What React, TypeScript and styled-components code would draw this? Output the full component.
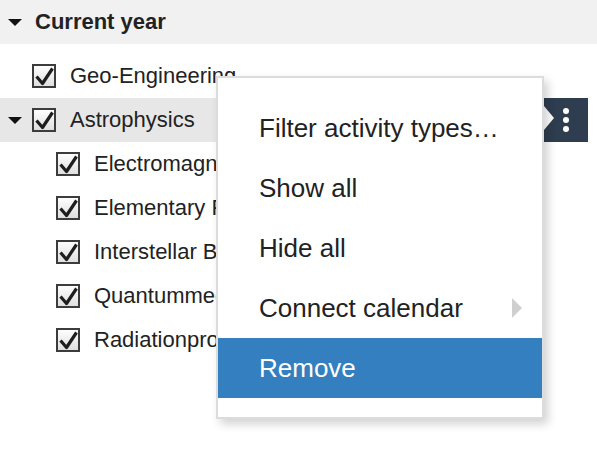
import React from 'react';
import styled, { createGlobalStyle } from 'styled-components';

const GlobalStyle = createGlobalStyle`
	body {
		margin: 0;
		background: #fff;
		font-family: 'Liberation Sans', Arial, sans-serif;
		color: #222;
	}
`;

type Item = { id: string; label: string; level: number; expanded?: boolean; active?: boolean };

const items: Item[] = [
	{ id: 'geo', label: 'Geo-Engineering', level: 0 },
	{ id: 'astro', label: 'Astrophysics', level: 0, expanded: true, active: true },
	{ id: 'em', label: 'Electromagnetic Radiation', level: 1 },
	{ id: 'ep', label: 'Elementary Particles', level: 1 },
	{ id: 'ib', label: 'Interstellar Bodies', level: 1 },
	{ id: 'qm', label: 'Quantummechanics', level: 1 },
	{ id: 'rp', label: 'Radiationprotection', level: 1 },
];

const menuItems = [
	{ label: 'Filter activity types…' },
	{ label: 'Show all' },
	{ label: 'Hide all' },
	{ label: 'Connect calendar', submenu: true },
	{ label: 'Remove', highlighted: true },
];

function CheckBox() {
	return (
		<svg width="24" height="24" viewBox="0 0 24 24">
			<defs>
				<linearGradient id="cbg" x1="0" y1="0" x2="0" y2="1">
					<stop offset="0" stopColor="#ffffff" />
					<stop offset="1" stopColor="#dedede" />
				</linearGradient>
			</defs>
			<rect x="1" y="1" width="22" height="22" fill="url(#cbg)" stroke="#3c3c3c" strokeWidth="2" />
			<path d="M4.5 12.5 L10.5 19.5 L20.5 4.5" fill="none" stroke="#1e1e1e" strokeWidth="3.2" strokeLinejoin="round" />
		</svg>
	);
}

function App() {
	return (
		<Page>
			<GlobalStyle />
			<GroupHeader>
				<Caret />
				<GroupTitle>Current year</GroupTitle>
			</GroupHeader>
			<Tree>
				{items.map((item) => (
					<Row key={item.id}>
						<RowBand $level={item.level} $active={!!item.active}>
							<CaretSlot>{item.expanded && <Caret />}</CaretSlot>
							<CheckBox />
							<Label>{item.label}</Label>
						</RowBand>
						{item.active && (
							<ActionButton>
								<Notch />
								<Dots>
									<span />
									<span />
									<span />
								</Dots>
							</ActionButton>
						)}
					</Row>
				))}
			</Tree>
			<Menu>
				{menuItems.map((m) => (
					<MenuItem key={m.label} $highlighted={!!m.highlighted}>
						{m.label}
						{m.submenu && <SubArrow />}
					</MenuItem>
				))}
			</Menu>
		</Page>
	);
}

const Page = styled.div`
	position: relative;
	width: 597px;
	height: 449px;
	overflow: hidden;
`;

const GroupHeader = styled.div`
	height: 44px;
	background: #f1f1f1;
	display: flex;
	align-items: center;
	padding-left: 8px;
`;

const Caret = styled.span`
	display: inline-block;
	width: 0;
	height: 0;
	border-left: 7px solid transparent;
	border-right: 7px solid transparent;
	border-top: 7px solid #111;
`;

const GroupTitle = styled.span`
	margin-left: 13px;
	font-size: 22px;
	font-weight: bold;
	color: #222;
`;

const Tree = styled.div`
	padding-top: 10px;
	padding-right: 9px;
`;

const Row = styled.div`
	display: flex;
	height: 44px;
`;

const RowBand = styled.div<{ $level: number; $active: boolean }>`
	flex: 1;
	display: flex;
	align-items: center;
	padding-left: ${(p) => p.$level * 24}px;
	background: ${(p) => (p.$active ? '#e7e7e7' : 'transparent')};
	white-space: nowrap;
	overflow: hidden;
`;

const CaretSlot = styled.span`
	width: 32px;
	display: flex;
	justify-content: center;
	padding-right: 3px;
	box-sizing: border-box;
`;

const Label = styled.span`
	margin-left: 14px;
	font-size: 22px;
	color: #222;
`;

const ActionButton = styled.div`
	position: relative;
	width: 44px;
	height: 44px;
	background: #2e3d4f;
	display: flex;
	align-items: center;
	justify-content: center;
`;

const Notch = styled.span`
	position: absolute;
	left: 0;
	top: 8px;
	width: 0;
	height: 0;
	border-top: 12px solid transparent;
	border-bottom: 12px solid transparent;
	border-left: 10px solid #fff;
`;

const Dots = styled.div`
	display: flex;
	flex-direction: column;
	gap: 3px;
	span {
		width: 6px;
		height: 6px;
		border-radius: 50%;
		background: #fff;
	}
`;

const Menu = styled.div`
	position: absolute;
	left: 216px;
	top: 76px;
	width: 328px;
	box-sizing: border-box;
	padding: 20px 0 19px;
	background: #fff;
	border: 2px solid #dcdcdc;
	box-shadow: 4px 5px 9px rgba(0, 0, 0, 0.18);
`;

const MenuItem = styled.div<{ $highlighted: boolean }>`
	position: relative;
	height: 60px;
	display: flex;
	align-items: center;
	padding-left: 41px;
	font-size: 26px;
	color: ${(p) => (p.$highlighted ? '#fff' : '#222')};
	background: ${(p) => (p.$highlighted ? '#337fc0' : 'transparent')};
`;

const SubArrow = styled.span`
	position: absolute;
	right: 20px;
	top: 20px;
	width: 0;
	height: 0;
	border-top: 10px solid transparent;
	border-bottom: 10px solid transparent;
	border-left: 10px solid #cfcfcf;
`;

export default App;
